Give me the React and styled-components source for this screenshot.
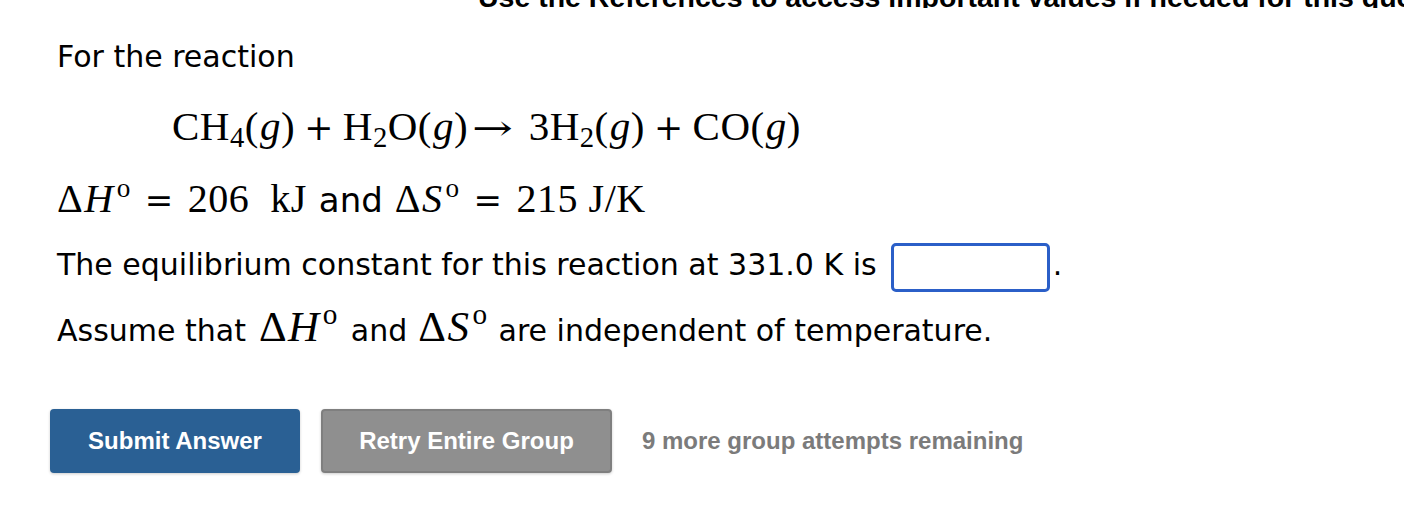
import React from 'react';
import styled, { createGlobalStyle } from 'styled-components';

const GlobalStyle = createGlobalStyle`
  body {
    margin: 0;
    background: #fff;
    color: #000;
    font-family: "DejaVu Sans", Verdana, sans-serif;
  }
`;

const Page = styled.div`
  width: 1404px;
  height: 532px;
  overflow: hidden;
`;

const Notice = styled.div`
  height: 8px;
  overflow: hidden;
  display: flex;
  align-items: flex-end;
  padding-left: 478px;
  white-space: nowrap;
  font-family: "Liberation Sans", Arial, sans-serif;
  font-weight: bold;
  font-size: 28.5px;
  line-height: 22px;
`;

const Body = styled.div`
  padding: 0 0 0 57px;
`;

const Line = styled.div`
  height: ${(p) => p.h}px;
  display: flex;
  align-items: center;
  font-size: 30px;
  white-space: nowrap;
  padding-left: ${(p) => p.indent || 0}px;
`;

const Content = styled.span`
  display: block;
  margin-top: ${(p) => p.shift || 0}px;
`;

const Math = styled.span`
  font-family: "Liberation Serif", "Times New Roman", serif;
  font-size: ${(p) => p.size || 40}px;
  letter-spacing: 0.5px;
  white-space: pre;
  margin: 0 ${(p) => p.space || 0}px;
`;

const I = styled.i`
  font-style: italic;
  margin-left: 1px;
`;

const Sub = styled.sub`
  font-size: 0.7em;
  vertical-align: -0.25em;
  line-height: 0;
`;

const Sup = styled.sup`
  font-size: 0.68em;
  vertical-align: 0.55em;
  line-height: 0;
  margin-left: 3px;
`;

const Op = styled.span`
  display: inline-block;
  margin: 0 ${(p) => p.gap || 9}px;
  font-family: "DejaVu Serif", serif;
  font-size: 0.85em;
  transform: scaleX(${(p) => p.stretch || 1});
`;

const MathText = styled.span`
  font-family: "DejaVu Sans", Verdana, sans-serif;
  font-size: 34px;
  margin: 0 12px;
`;

const AnswerBox = styled.input`
  width: 153px;
  height: 43px;
  box-sizing: content-box;
  margin: 6px 3px 0 14px;
  border: 3px solid #2b5fc8;
  border-radius: 5px;
  padding: 0;
  outline: none;
`;

const Actions = styled.div`
  display: flex;
  align-items: center;
  margin-top: 28px;
  padding-left: 50px;
  gap: 21px;
  font-family: "Liberation Sans", Arial, sans-serif;
`;

const Button = styled.button`
  height: 64px;
  width: ${(p) => p.w}px;
  box-sizing: border-box;
  border-radius: 4px;
  font-family: "Liberation Sans", Arial, sans-serif;
  font-weight: bold;
  font-size: 24px;
  color: #fff;
  background: ${(p) => (p.secondary ? '#8f8f8f' : '#2a6094')};
  border: ${(p) => (p.secondary ? '2px solid #7f7f7f' : '0')};
  box-shadow: 0 1px 3px rgba(0, 0, 0, 0.2);
  cursor: pointer;
`;

const Attempts = styled.span`
  margin-left: 9px;
  font-weight: bold;
  font-size: 24px;
  color: #7b7b7b;
`;

const Delta = ({ v }) => (
  <>
    Δ<I>{v}</I>
    <Sup>o</Sup>
  </>
);

export default function App() {
  return (
    <Page>
      <GlobalStyle />
      <Notice>Use the References to access important values if needed for this question.</Notice>
      <Body>
        <Line h={97}>For the reaction</Line>
        <Line h={42} indent={115}>
          <Math size={41}>
            CH<Sub>4</Sub>(<I>g</I>)<Op>+</Op>H<Sub>2</Sub>O(<I>g</I>)
            <Op gap={10} stretch={1.4}>→</Op> 3H<Sub>2</Sub>(<I>g</I>)<Op>+</Op>CO(<I>g</I>)
          </Math>
        </Line>
        <Line h={104}>
          <Content shift={-2}>
            <Math>
              <Delta v="H" />
              <Op gap={14}>=</Op>206  kJ
            </Math>
            <MathText>and</MathText>
            <Math>
              <Delta v="S" />
              <Op gap={14}>=</Op>215 J/K
            </Math>
          </Content>
        </Line>
        <Line h={26}>
          The equilibrium constant for this reaction at 331.0 K is
          <AnswerBox type="text" aria-label="answer" />.
        </Line>
        <Line h={104}>
          <Content shift={-6}>
            Assume that
            <Math size={43} space={13}>
              <Delta v="H" />
            </Math>
            and
            <Math size={43} space={11}>
              <Delta v="S" />
            </Math>
            are independent of temperature.
          </Content>
        </Line>
      </Body>
      <Actions>
        <Button w={250}>Submit Answer</Button>
        <Button w={291} secondary>
          Retry Entire Group
        </Button>
        <Attempts>9 more group attempts remaining</Attempts>
      </Actions>
    </Page>
  );
}
